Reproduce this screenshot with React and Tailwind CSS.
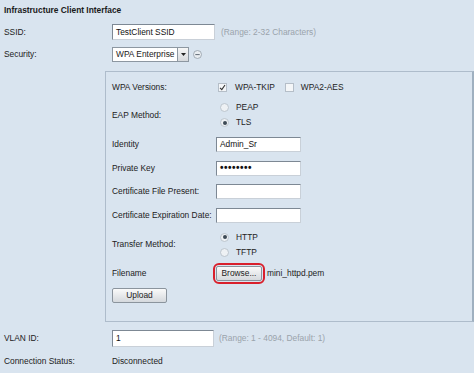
import React from "react";

const inputCls =
  "bg-white border border-t-[#7d8894] border-l-[#7d8894] border-r-[#c9d0d8] border-b-[#c9d0d8] flex items-center pl-[3px] text-[#111]";

function Checkbox({ checked }) {
  return (
    <span className="w-[9px] h-[9px] border border-[#b5bec8] bg-[#f4f6f8] flex items-center justify-center">
      {checked && (
        <svg width="7" height="7" viewBox="0 0 7 7">
          <path d="M1 3.8 L2.8 5.6 L6 1" stroke="#333" strokeWidth="1.1" fill="none" />
        </svg>
      )}
    </span>
  );
}

function Radio({ checked }) {
  return (
    <span className="w-[9px] h-[9px] rounded-full border border-[#bcc5ce] bg-[#eef1f4] flex items-center justify-center">
      {checked && <span className="w-[4px] h-[4px] rounded-full bg-[#3d4a55]" />}
    </span>
  );
}

function Btn({ children, w }) {
  return (
    <div
      className={`${w} h-[15px] border border-[#8b949d] rounded-[2px] bg-gradient-to-b from-[#fafafa] to-[#d5d9dd] flex items-center justify-center text-[#222]`}
    >
      {children}
    </div>
  );
}

function Row({ h, label, children }) {
  return (
    <div className={`flex items-center ${h}`}>
      <div className="w-[104px] shrink-0">{label}</div>
      <div className="flex items-center">{children}</div>
    </div>
  );
}

export default function App() {
  return (
    <div
      className="w-[474px] h-[373px] overflow-hidden bg-[#d9e4ef] text-[#222] text-[8.4px] leading-none pl-[4px]"
      style={{ fontFamily: '"Liberation Sans", Arial, sans-serif' }}
    >
      <div className="h-[21px] flex items-center font-bold text-[#1a1a1a]">
        Infrastructure Client Interface
      </div>
      <div className="h-[22px] flex items-center">
        <div className="w-[108px] shrink-0">SSID:</div>
        <div className={`${inputCls} w-[103px] h-[16px]`}>TestClient SSID</div>
        <div className="ml-[6px] text-[#9aa3ab]">(Range: 2-32 Characters)</div>
      </div>
      <div className="h-[23px] flex items-center">
        <div className="w-[108px] shrink-0">Security:</div>
        <div className="w-[77px] h-[15px] bg-white border border-[#8d97a1] flex items-center justify-between pl-[3px]">
          <span>WPA Enterprise</span>
          <span className="w-[11px] h-[13px] border-l border-[#8d97a1] bg-gradient-to-b from-[#f7f7f7] to-[#d6d9dc] flex items-center justify-center">
            <svg width="5" height="3" viewBox="0 0 5 3">
              <path d="M0 0 L5 0 L2.5 3 Z" fill="#222" />
            </svg>
          </span>
        </div>
        <svg className="ml-[4px]" width="9" height="9" viewBox="0 0 9 9">
          <circle cx="4.5" cy="4.5" r="4" fill="#e9edf1" stroke="#9aa4ae" strokeWidth="0.9" />
          <rect x="2.3" y="4" width="4.4" height="1.1" fill="#6d7781" />
        </svg>
      </div>

      <div className="mt-[5px] ml-[101px] w-[369px] h-[251px] border border-[#aebccb] border-r-2 border-r-[#9fb0c0] bg-[#d9e4ef] pl-[6px] pt-[4px]">
        <Row h="h-[22px]" label="WPA Versions:">
          <span className="ml-[2px]"><Checkbox checked /></span>
          <span className="ml-[8px]">WPA-TKIP</span>
          <span className="ml-[10px]"><Checkbox /></span>
          <span className="ml-[7px]">WPA2-AES</span>
        </Row>
        <div className="flex items-center h-[34px]">
          <div className="w-[104px] shrink-0">EAP Method:</div>
          <div className="flex flex-col pl-[4px]">
            <div className="h-[15px] flex items-center"><Radio /><span className="ml-[7px]">PEAP</span></div>
            <div className="h-[15px] flex items-center"><Radio checked /><span className="ml-[7px]">TLS</span></div>
          </div>
        </div>
        <Row h="h-[24px]" label="Identity">
          <div className={`${inputCls} w-[85px] h-[15px]`}>Admin_Sr</div>
        </Row>
        <Row h="h-[24px]" label="Private Key">
          <div className={`${inputCls} w-[85px] h-[15px] tracking-[0.5px] text-[10px] font-bold`}>••••••••</div>
        </Row>
        <Row h="h-[23px]" label="Certificate File Present:">
          <div className={`${inputCls} w-[85px] h-[15px]`}></div>
        </Row>
        <Row h="h-[24px]" label="Certificate Expiration Date:">
          <div className={`${inputCls} w-[85px] h-[15px]`}></div>
        </Row>
        <div className="flex items-center h-[35px]">
          <div className="w-[104px] shrink-0">Transfer Method:</div>
          <div className="flex flex-col pl-[4px]">
            <div className="h-[15px] flex items-center"><Radio checked /><span className="ml-[7px]">HTTP</span></div>
            <div className="h-[15px] flex items-center"><Radio /><span className="ml-[7px]">TFTP</span></div>
          </div>
        </div>
        <Row h="h-[22px]" label="Filename">
          <div className="-ml-[3px] rounded-[6px] border-2 border-[#d9202c] p-[1px]">
            <Btn w="w-[46px]">Browse...</Btn>
          </div>
          <span className="ml-[2px]">mini_httpd.pem</span>
        </Row>
        <div className="h-[23px] flex items-center">
          <Btn w="w-[55px]">Upload</Btn>
        </div>
      </div>

      <div className="mt-[4px] h-[24px] flex items-center">
        <div className="w-[108px] shrink-0">VLAN ID:</div>
        <div className={`${inputCls} w-[102px] h-[17px]`}>1</div>
        <div className="ml-[5px] text-[#9aa3ab]">(Range: 1 - 4094, Default: 1)</div>
      </div>
      <div className="h-[22px] flex items-center">
        <div className="w-[108px] shrink-0">Connection Status:</div>
        <div>Disconnected</div>
      </div>
    </div>
  );
}
